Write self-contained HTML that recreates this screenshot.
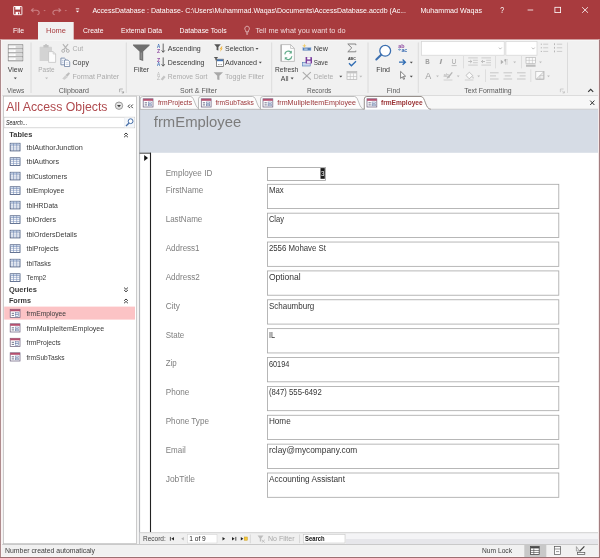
<!DOCTYPE html>
<html lang="en">
<head>
<meta charset="utf-8">
<title>AccessDatabase : Database - frmEmployee</title>
<style>
html,body{margin:0;padding:0;background:#fff;}
body{width:600px;height:558px;overflow:hidden;position:relative;}
#app{position:absolute;left:0;top:0;width:600px;height:558px;overflow:hidden;}
#ui{position:absolute;left:0;top:0;display:block;font-family:"Liberation Sans",sans-serif;}
#ui{will-change:transform;}
#ui text{white-space:pre;}
</style>
</head>
<body>
<div id="app">
<svg id="ui" width="600" height="558" viewBox="0 0 600 558">
<g id="base-surfaces">
<rect x="0.00" y="0.00" width="600.00" height="558.00" fill="#FFFFFF"/>
<rect x="0.00" y="0.00" width="600.00" height="39.80" fill="#A83B3E"/>
<rect x="0.00" y="39.80" width="600.00" height="55.70" fill="#F1F1F1"/>
<line x1="0.00" y1="40.20" x2="600.00" y2="40.20" stroke="#FAFAFA" stroke-width="0.8"/>
<line x1="0.00" y1="95.60" x2="600.00" y2="95.60" stroke="#D0D0D0" stroke-width="0.8"/>
<rect x="38.00" y="22.00" width="35.70" height="18.00" fill="#F1F1F1"/>
<rect x="139.70" y="96.00" width="458.60" height="13.20" fill="#F7F7F7"/>
<rect x="1.30" y="96.00" width="138.40" height="448.20" fill="#F3F3F3"/>
<rect x="3.50" y="96.20" width="132.90" height="447.50" fill="#FFFFFF" stroke="#B9B9B9" stroke-width="0.7"/>
<rect x="139.70" y="109.20" width="458.60" height="43.60" fill="#D6DCE5"/>
<line x1="139.60" y1="96.00" x2="139.60" y2="544.00" stroke="#9A9DA3" stroke-width="0.8"/>
<line x1="139.60" y1="153.20" x2="151.00" y2="153.20" stroke="#2E2E2E" stroke-width="0.9"/>
<line x1="150.50" y1="152.80" x2="150.50" y2="532.40" stroke="#222" stroke-width="1.1"/>
<path d="M144.2,155.1 L148,158.1 L144.2,161.1 Z" fill="#111"/>
<rect x="139.70" y="532.30" width="458.60" height="12.10" fill="#F0F0F0"/>
<rect x="346.00" y="533.20" width="252.00" height="5.80" fill="#F4F4F6"/>
<rect x="346.00" y="539.00" width="252.00" height="5.20" fill="#E6E6EA"/>
<line x1="139.70" y1="532.70" x2="598.30" y2="532.70" stroke="#D0D0D0" stroke-width="0.9"/>
<rect x="0.00" y="544.20" width="600.00" height="13.80" fill="#F1F1F1"/>
<line x1="0.00" y1="544.50" x2="600.00" y2="544.50" stroke="#C4C4C4" stroke-width="0.9"/>
<line x1="0.00" y1="556.60" x2="600.00" y2="556.60" stroke="#FBF4F4" stroke-width="0.8"/>
<rect x="524.30" y="544.60" width="22.00" height="12.40" fill="#C8C8C8"/>
</g>
<g id="title-bar">
<text x="92.40" y="12.60" font-size="7.4" fill="#FFFFFF" textLength="313.60" lengthAdjust="spacingAndGlyphs">AccessDatabase : Database- C:\Users\Muhammad.Waqas\Documents\AccessDatabase.accdb (Ac...</text>
<text x="420.40" y="12.60" font-size="7.4" fill="#FFFFFF" textLength="61.60" lengthAdjust="spacingAndGlyphs">Muhammad Waqas</text>
<text x="500.30" y="13.10" font-size="8.6" fill="#FFFFFF" textLength="3.80" lengthAdjust="spacingAndGlyphs">?</text>
<line x1="527.60" y1="10.00" x2="533.20" y2="10.00" stroke="#FFFFFF" stroke-width="0.8"/>
<rect x="554.90" y="7.30" width="5.70" height="5.30" fill="none" stroke="#FFFFFF" stroke-width="0.8"/>
<path d="M582.2,7.2 L588,12.8 M588,7.2 L582.2,12.8" fill="none" stroke="#FFFFFF" stroke-width="0.8"/>
<rect x="13.70" y="6.50" width="8.20" height="8.20" fill="none" stroke="#FFFFFF" stroke-width="0.9" rx="0.3"/>
<rect x="15.30" y="6.40" width="4.90" height="3.20" fill="#FFFFFF"/>
<rect x="15.60" y="11.80" width="4.30" height="3.00" fill="#FFFFFF"/>
<rect x="18.00" y="12.50" width="1.20" height="1.80" fill="#A83B3E"/>
<path d="M33.5,8.4 L31.4,10.3 L33.5,12.2 M31.6,10.3 L36.2,10.3 Q39.4,10.4 39.2,13.2 Q39,14.4 37.4,14.8" fill="none" stroke="#CB8184" stroke-width="1.1"/>
<path d="M43.40,9.90 L45.80,9.90 L44.60,11.30 Z" fill="#C87A7D"/>
<path d="M58.6,8.4 L60.7,10.3 L58.6,12.2 M60.5,10.3 L55.9,10.3 Q52.7,10.4 52.9,13.2 Q53.1,14.4 54.7,14.8" fill="none" stroke="#CB8184" stroke-width="1.1"/>
<path d="M64.60,9.90 L67.00,9.90 L65.80,11.30 Z" fill="#C87A7D"/>
<line x1="75.80" y1="8.80" x2="79.20" y2="8.80" stroke="#FFFFFF" stroke-width="0.8"/>
<path d="M75.90,10.70 L79.10,10.70 L77.50,12.50 Z" fill="#FFFFFF"/>
</g>
<g id="ribbon-tabs">
<text x="13.00" y="33.00" font-size="7.4" fill="#FFFFFF" textLength="11.20" lengthAdjust="spacingAndGlyphs">File</text>
<text x="46.00" y="33.00" font-size="7.4" fill="#A83B3E" textLength="20.00" lengthAdjust="spacingAndGlyphs">Home</text>
<text x="83.00" y="33.00" font-size="7.4" fill="#FFFFFF" textLength="20.60" lengthAdjust="spacingAndGlyphs">Create</text>
<text x="121.00" y="33.00" font-size="7.4" fill="#FFFFFF" textLength="41.00" lengthAdjust="spacingAndGlyphs">External Data</text>
<text x="179.60" y="33.00" font-size="7.4" fill="#FFFFFF" textLength="47.00" lengthAdjust="spacingAndGlyphs">Database Tools</text>
<text x="255.40" y="33.00" font-size="7.4" fill="#F0D9DA" textLength="90.20" lengthAdjust="spacingAndGlyphs">Tell me what you want to do</text>
<path d="M244.9,29.2 a2.3,2.3 0 1 1 4.4,0 q-0.9,1.2 -0.9,2.6 l-2.6,0 q0,-1.4 -0.9,-2.6 Z" fill="none" stroke="#F0D9DA" stroke-width="0.7"/>
<line x1="246.00" y1="33.00" x2="248.20" y2="33.00" stroke="#F0D9DA" stroke-width="0.7"/>
<line x1="246.30" y1="34.20" x2="247.90" y2="34.20" stroke="#F0D9DA" stroke-width="0.7"/>
</g>
<g id="ribbon-groups">
<line x1="31.00" y1="42.50" x2="31.00" y2="93.00" stroke="#D6D6D6" stroke-width="0.8"/>
<line x1="126.30" y1="42.50" x2="126.30" y2="93.00" stroke="#D6D6D6" stroke-width="0.8"/>
<line x1="271.70" y1="42.50" x2="271.70" y2="93.00" stroke="#D6D6D6" stroke-width="0.8"/>
<line x1="368.00" y1="42.50" x2="368.00" y2="93.00" stroke="#D6D6D6" stroke-width="0.8"/>
<line x1="418.30" y1="42.50" x2="418.30" y2="93.00" stroke="#D6D6D6" stroke-width="0.8"/>
<line x1="567.50" y1="42.50" x2="567.50" y2="93.00" stroke="#D6D6D6" stroke-width="0.8"/>
<text x="7.00" y="92.80" font-size="7.2" fill="#5A5A5A" textLength="17.20" lengthAdjust="spacingAndGlyphs">Views</text>
<text x="58.70" y="92.80" font-size="7.2" fill="#5A5A5A" textLength="30.30" lengthAdjust="spacingAndGlyphs">Clipboard</text>
<text x="180.00" y="92.80" font-size="7.2" fill="#5A5A5A" textLength="37.00" lengthAdjust="spacingAndGlyphs">Sort &amp; Filter</text>
<text x="307.00" y="92.80" font-size="7.2" fill="#5A5A5A" textLength="24.30" lengthAdjust="spacingAndGlyphs">Records</text>
<text x="386.70" y="92.80" font-size="7.2" fill="#5A5A5A" textLength="13.30" lengthAdjust="spacingAndGlyphs">Find</text>
<text x="464.20" y="92.80" font-size="7.2" fill="#5A5A5A" textLength="47.50" lengthAdjust="spacingAndGlyphs">Text Formatting</text>
<text x="7.80" y="71.80" font-size="7.2" fill="#3A3A3A" textLength="15.00" lengthAdjust="spacingAndGlyphs">View</text>
<path d="M13.80,77.50 L16.80,77.50 L15.30,79.30 Z" fill="#4A4A4A"/>
<text x="38.30" y="71.80" font-size="7.2" fill="#ABABAB" textLength="16.40" lengthAdjust="spacingAndGlyphs">Paste</text>
<path d="M45.10,77.50 L48.10,77.50 L46.60,79.30 Z" fill="#BDBDBD"/>
<text x="72.50" y="50.90" font-size="7.2" fill="#ABABAB" textLength="10.80" lengthAdjust="spacingAndGlyphs">Cut</text>
<text x="72.50" y="64.90" font-size="7.2" fill="#3A3A3A" textLength="16.50" lengthAdjust="spacingAndGlyphs">Copy</text>
<text x="72.50" y="78.80" font-size="7.2" fill="#ABABAB" textLength="46.70" lengthAdjust="spacingAndGlyphs">Format Painter</text>
<text x="133.70" y="71.80" font-size="7.2" fill="#3A3A3A" textLength="15.50" lengthAdjust="spacingAndGlyphs">Filter</text>
<text x="167.80" y="50.90" font-size="7.2" fill="#3A3A3A" textLength="33.00" lengthAdjust="spacingAndGlyphs">Ascending</text>
<text x="167.80" y="64.90" font-size="7.2" fill="#3A3A3A" textLength="36.70" lengthAdjust="spacingAndGlyphs">Descending</text>
<text x="167.80" y="78.80" font-size="7.2" fill="#ABABAB" textLength="39.70" lengthAdjust="spacingAndGlyphs">Remove Sort</text>
<text x="225.00" y="50.90" font-size="7.2" fill="#3A3A3A" textLength="28.80" lengthAdjust="spacingAndGlyphs">Selection</text>
<path d="M255.50,47.90 L258.50,47.90 L257.00,49.70 Z" fill="#4A4A4A"/>
<text x="225.00" y="64.90" font-size="7.2" fill="#3A3A3A" textLength="32.00" lengthAdjust="spacingAndGlyphs">Advanced</text>
<path d="M258.80,61.80 L261.80,61.80 L260.30,63.60 Z" fill="#4A4A4A"/>
<text x="225.00" y="78.80" font-size="7.2" fill="#ABABAB" textLength="39.20" lengthAdjust="spacingAndGlyphs">Toggle Filter</text>
<text x="275.00" y="71.80" font-size="7.2" fill="#3A3A3A" textLength="23.30" lengthAdjust="spacingAndGlyphs">Refresh</text>
<text x="280.80" y="80.80" font-size="7.2" fill="#3A3A3A" textLength="7.70" lengthAdjust="spacingAndGlyphs">All</text>
<path d="M290.60,77.60 L293.60,77.60 L292.10,79.40 Z" fill="#4A4A4A"/>
<text x="313.70" y="50.90" font-size="7.2" fill="#3A3A3A" textLength="14.30" lengthAdjust="spacingAndGlyphs">New</text>
<text x="313.70" y="64.90" font-size="7.2" fill="#3A3A3A" textLength="14.30" lengthAdjust="spacingAndGlyphs">Save</text>
<text x="313.70" y="78.80" font-size="7.2" fill="#ABABAB" textLength="19.60" lengthAdjust="spacingAndGlyphs">Delete</text>
<path d="M339.30,75.70 L342.30,75.70 L340.80,77.50 Z" fill="#4A4A4A"/>
<path d="M359.30,75.70 L362.30,75.70 L360.80,77.50 Z" fill="#BDBDBD"/>
<text x="376.30" y="71.80" font-size="7.2" fill="#3A3A3A" textLength="13.70" lengthAdjust="spacingAndGlyphs">Find</text>
<path d="M409.80,61.80 L412.80,61.80 L411.30,63.60 Z" fill="#4A4A4A"/>
<path d="M409.80,75.70 L412.80,75.70 L411.30,77.50 Z" fill="#4A4A4A"/>
<rect x="421.40" y="41.50" width="82.80" height="13.70" fill="#FFFFFF" stroke="#D4D4D4" stroke-width="0.7"/>
<rect x="505.90" y="41.50" width="31.10" height="13.70" fill="#FFFFFF" stroke="#D4D4D4" stroke-width="0.7"/>
<path d="M498.9,47.6 L500.3,49.1 L501.7,47.6" fill="none" stroke="#A0A0A0" stroke-width="0.7"/>
<path d="M531.9,47.6 L533.3,49.1 L534.7,47.6" fill="none" stroke="#A0A0A0" stroke-width="0.7"/>
</g>
<g id="ribbon-icons">
<rect x="8.20" y="44.80" width="14.60" height="4.00" fill="#FFFFFF"/>
<rect x="15.60" y="45.80" width="6.60" height="2.20" fill="#D8D8D8"/>
<rect x="9.20" y="46.10" width="5.00" height="1.40" fill="#F4F4F4"/>
<rect x="8.20" y="48.80" width="14.60" height="4.00" fill="#FFFFFF"/>
<rect x="15.60" y="49.80" width="6.60" height="2.20" fill="#D8D8D8"/>
<rect x="9.20" y="50.10" width="5.00" height="1.40" fill="#F4F4F4"/>
<rect x="8.20" y="52.80" width="14.60" height="4.00" fill="#FFFFFF"/>
<rect x="15.60" y="53.80" width="6.60" height="2.20" fill="#D8D8D8"/>
<rect x="9.20" y="54.10" width="5.00" height="1.40" fill="#F4F4F4"/>
<rect x="8.20" y="56.80" width="14.60" height="4.00" fill="#FFFFFF"/>
<rect x="15.60" y="57.80" width="6.60" height="2.20" fill="#D8D8D8"/>
<rect x="9.20" y="58.10" width="5.00" height="1.40" fill="#F4F4F4"/>
<line x1="8.00" y1="44.80" x2="23.00" y2="44.80" stroke="#777777" stroke-width="0.8"/>
<line x1="8.00" y1="48.80" x2="23.00" y2="48.80" stroke="#777777" stroke-width="0.8"/>
<line x1="8.00" y1="52.80" x2="23.00" y2="52.80" stroke="#777777" stroke-width="0.8"/>
<line x1="8.00" y1="56.80" x2="23.00" y2="56.80" stroke="#777777" stroke-width="0.8"/>
<line x1="8.00" y1="60.80" x2="23.00" y2="60.80" stroke="#777777" stroke-width="0.8"/>
<line x1="8.30" y1="44.50" x2="8.30" y2="61.00" stroke="#8A8A8A" stroke-width="0.7"/>
<line x1="22.80" y1="44.50" x2="22.80" y2="61.00" stroke="#8A8A8A" stroke-width="0.7"/>
<rect x="39.60" y="46.80" width="12.40" height="14.20" fill="#D3D3D3" rx="0.6"/>
<rect x="43.40" y="45.00" width="5.20" height="2.60" fill="#C2C2C2" rx="0.5"/>
<rect x="45.00" y="44.20" width="2.00" height="1.20" fill="#C2C2C2"/>
<path d="M48.6,51.6 L53.2,51.6 L55.6,54 L55.6,62.4 L48.6,62.4 Z" fill="#FCFCFC" stroke="#BEBEBE" stroke-width="0.7"/>
<path d="M53.2,51.6 L53.2,54 L55.6,54" fill="none" stroke="#BEBEBE" stroke-width="0.6"/>
<path d="M62.9,44.2 L67.5,49.8 M68.1,44.2 L63.5,49.8" fill="none" stroke="#B4B4B4" stroke-width="1.15"/>
<circle cx="63.2" cy="50.9" r="1.45" fill="none" stroke="#B4B4B4" stroke-width="1"/>
<circle cx="67.8" cy="50.9" r="1.45" fill="none" stroke="#B4B4B4" stroke-width="1"/>
<path d="M60.9,58.1 L64.4,58.1 L66,59.7 L66,64.8 L60.9,64.8 Z" fill="#F2F5FA" stroke="#64799C" stroke-width="0.75"/>
<path d="M64.5,60.1 L68,60.1 L69.7,61.8 L69.7,66.5 L64.5,66.5 Z" fill="#FFFFFF" stroke="#64799C" stroke-width="0.75"/>
<line x1="61.90" y1="60.50" x2="63.40" y2="60.50" stroke="#8A9CBC" stroke-width="0.5"/>
<line x1="61.90" y1="62.30" x2="63.40" y2="62.30" stroke="#8A9CBC" stroke-width="0.5"/>
<line x1="65.70" y1="62.80" x2="68.50" y2="62.80" stroke="#9FB0CC" stroke-width="0.5"/>
<line x1="65.70" y1="64.50" x2="68.50" y2="64.50" stroke="#9FB0CC" stroke-width="0.5"/>
<path d="M62.2,78.8 L65.4,75.2 L67.6,77.2 L64.6,79.8 Z" fill="#CFCFCF"/>
<path d="M65.6,75 L68.8,72.2 L70,73.4 L67.4,76.8 Z" fill="#BDBDBD"/>
<path d="M133,44.6 L149.6,44.6 L149.6,45.4 L143.2,51.6 L143.2,61 L139.5,59.8 L139.5,51.6 L133,45.4 Z" fill="#6F6F6F"/>
<path d="M140.6,52.4 L142.2,52.4 L142.2,59.6 L140.6,59.1 Z" fill="#8E8E8E"/>
<text x="157.00" y="48.00" font-size="5.2" fill="#3B6DB3" font-weight="700" textLength="3.20" lengthAdjust="spacingAndGlyphs">A</text>
<text x="157.00" y="52.60" font-size="5.2" fill="#8E4AA0" font-weight="700" textLength="3.20" lengthAdjust="spacingAndGlyphs">Z</text>
<path d="M163.2,43.6 L163.2,52 M161.6,50.4 L163.2,52.4 L164.8,50.4" fill="none" stroke="#444" stroke-width="0.8"/>
<text x="157.00" y="61.80" font-size="5.2" fill="#8E4AA0" font-weight="700" textLength="3.20" lengthAdjust="spacingAndGlyphs">Z</text>
<text x="157.00" y="66.40" font-size="5.2" fill="#3B6DB3" font-weight="700" textLength="3.20" lengthAdjust="spacingAndGlyphs">A</text>
<path d="M163.2,57.4 L163.2,65.8 M161.6,64.2 L163.2,66.2 L164.8,64.2" fill="none" stroke="#444" stroke-width="0.8"/>
<text x="157.00" y="75.60" font-size="5" fill="#B5B5B5" textLength="3.00" lengthAdjust="spacingAndGlyphs">A</text>
<text x="157.00" y="80.20" font-size="5" fill="#B5B5B5" textLength="3.00" lengthAdjust="spacingAndGlyphs">Z</text>
<path d="M160.6,79.2 L163.8,75.6 L165.6,77 L162.6,80.4 Z" fill="#C4C4C4"/>
<path d="M214.2,44.2 L220.8,44.2 L218.4,47 L218.4,50.6 L216.6,50 L216.6,47 Z" fill="#555"/>
<path d="M221.4,46.4 L219.6,49.2 L221,49.2 L219.8,52 L222.8,48.4 L221.4,48.4 L222.6,46.4 Z" fill="#F0B43C"/>
<path d="M213.8,57 L218.2,57 L216.6,58.8 L216.6,60.6 L215.4,60.2 L215.4,58.8 Z" fill="#555"/>
<rect x="216.60" y="59.20" width="6.80" height="7.20" fill="#FFFFFF" stroke="#5A5A5A" stroke-width="0.7"/>
<rect x="217.00" y="59.40" width="6.00" height="1.80" fill="#3F6FAE"/>
<line x1="218.00" y1="64.60" x2="222.00" y2="64.60" stroke="#555" stroke-width="0.7" stroke-dasharray="0.8 0.8"/>
<path d="M213.6,72.2 L223,72.2 L219.4,75.8 L219.4,80 L217.2,79.4 L217.2,75.8 Z" fill="#A9A9A9"/>
<path d="M281.2,44.6 L290.6,44.6 L294.4,48.4 L294.4,61.4 L281.2,61.4 Z" fill="#FDFDFD" stroke="#B4B4B4" stroke-width="0.8"/>
<line x1="281.20" y1="44.60" x2="281.20" y2="61.40" stroke="#B6B6B6" stroke-width="1.6"/>
<path d="M290.6,44.6 L290.6,48.4 L294.4,48.4" fill="none" stroke="#B4B4B4" stroke-width="0.7"/>
<path d="M284.8,54.4 A3.6,3.6 0 0 1 291,52.2" fill="none" stroke="#5FAA88" stroke-width="1.2"/>
<path d="M291.8,50.6 L291.8,53.4 L289,53.4 Z" fill="#5FAA88"/>
<path d="M291.8,56.2 A3.6,3.6 0 0 1 285.6,58.4" fill="none" stroke="#5FAA88" stroke-width="1.2"/>
<path d="M284.8,60 L284.8,57.2 L287.6,57.2 Z" fill="#5FAA88"/>
<rect x="302.80" y="47.60" width="8.20" height="3.00" fill="#527DB6" stroke="#A9BCD9" stroke-width="0.5"/>
<rect x="304.20" y="48.60" width="3.40" height="1.00" fill="#DCE6F4"/>
<path d="M304.4,43.6 L305,45.2 L306.6,45.8 L305,46.4 L304.4,48 L303.8,46.4 L302.2,45.8 L303.8,45.2 Z" fill="#F1CC6A"/>
<rect x="302.60" y="62.40" width="7.60" height="3.60" fill="#C9D8EE" stroke="#4E78B4" stroke-width="0.6"/>
<rect x="305.60" y="57.00" width="6.40" height="6.40" fill="#7A3E9D" rx="0.4"/>
<rect x="307.20" y="57.20" width="3.20" height="2.20" fill="#FFFFFF"/>
<rect x="307.00" y="60.80" width="3.60" height="2.60" fill="#E9DDF1"/>
<path d="M302.8,72.2 L310.8,79.6 M310.8,72.2 L302.8,79.6" fill="none" stroke="#ABABAB" stroke-width="1.15"/>
<path d="M355.8,45.2 L355.8,44 L347.8,44 L351.8,47.9 L347.8,51.8 L355.8,51.8 L355.8,50.6" fill="none" stroke="#7A7A7A" stroke-width="0.9"/>
<text x="348.00" y="59.90" font-size="3.8" fill="#333" font-weight="700" textLength="7.80" lengthAdjust="spacingAndGlyphs">ABC</text>
<path d="M349,63.2 L351.4,65.8 L356,61.2" fill="none" stroke="#2F6CB3" stroke-width="1.3"/>
<rect x="347.00" y="71.40" width="9.80" height="8.20" fill="#F8F8F8" stroke="#B5B5B5" stroke-width="0.7"/>
<rect x="347.00" y="71.40" width="9.80" height="2.00" fill="#C3C3C3"/>
<line x1="350.30" y1="73.40" x2="350.30" y2="79.60" stroke="#BDBDBD" stroke-width="0.6"/>
<line x1="353.50" y1="73.40" x2="353.50" y2="79.60" stroke="#BDBDBD" stroke-width="0.6"/>
<line x1="347.00" y1="76.50" x2="356.80" y2="76.50" stroke="#BDBDBD" stroke-width="0.6"/>
<circle cx="385.2" cy="50.8" r="5.4" fill="#FFFFFF" stroke="#3B6FB0" stroke-width="1.3"/>
<line x1="381.20" y1="54.80" x2="376.30" y2="59.50" stroke="#3B6FB0" stroke-width="2.0" stroke-linecap="round"/>
<text x="398.20" y="47.60" font-size="5.4" fill="#8E4AA0" font-weight="700" textLength="6.20" lengthAdjust="spacingAndGlyphs">ab</text>
<text x="401.40" y="52.40" font-size="5.4" fill="#3B6DB3" font-weight="700" textLength="5.80" lengthAdjust="spacingAndGlyphs">ac</text>
<path d="M398,49.6 L400.4,49.6 M399.4,48.6 L400.6,49.6 L399.4,50.6" fill="none" stroke="#3B6DB3" stroke-width="0.6"/>
<path d="M399,62.2 L405,62.2 M402.6,59.6 L405.4,62.2 L402.6,64.8" fill="none" stroke="#2F6CB3" stroke-width="1.3"/>
<path d="M400.6,71.4 L400.6,78.4 L402.4,76.8 L403.6,79.4 L404.6,79 L403.4,76.4 L405.6,76.2 Z" fill="#FFFFFF" stroke="#555" stroke-width="0.7"/>
<text x="425.20" y="64.40" font-size="7.4" fill="#9E9E9E" font-weight="700" textLength="4.50" lengthAdjust="spacingAndGlyphs">B</text>
<text x="439.40" y="64.40" font-size="7.4" fill="#9E9E9E" font-weight="700" font-style="italic" textLength="2.60" lengthAdjust="spacingAndGlyphs">I</text>
<text x="451.80" y="64.20" font-size="7.2" fill="#9E9E9E" textLength="4.50" lengthAdjust="spacingAndGlyphs">U</text>
<line x1="451.60" y1="65.60" x2="456.60" y2="65.60" stroke="#9E9E9E" stroke-width="0.6"/>
<line x1="463.50" y1="56.00" x2="463.50" y2="68.40" stroke="#D6D6D6" stroke-width="0.7"/>
<line x1="495.50" y1="56.00" x2="495.50" y2="68.40" stroke="#D6D6D6" stroke-width="0.7"/>
<line x1="521.50" y1="56.00" x2="521.50" y2="68.40" stroke="#D6D6D6" stroke-width="0.7"/>
<line x1="485.50" y1="69.40" x2="485.50" y2="82.00" stroke="#D6D6D6" stroke-width="0.7"/>
<line x1="530.80" y1="69.40" x2="530.80" y2="82.00" stroke="#D6D6D6" stroke-width="0.7"/>
<line x1="468.20" y1="57.90" x2="477.80" y2="57.90" stroke="#B5B5B5" stroke-width="0.6"/>
<line x1="468.20" y1="65.10" x2="477.80" y2="65.10" stroke="#B5B5B5" stroke-width="0.6"/>
<line x1="473.00" y1="60.30" x2="477.80" y2="60.30" stroke="#B5B5B5" stroke-width="0.6"/>
<line x1="473.00" y1="62.70" x2="477.80" y2="62.70" stroke="#B5B5B5" stroke-width="0.6"/>
<path d="M468.2,61.5 L471.59999999999997,61.5 M470.2,60 L471.8,61.5 L470.2,63" fill="none" stroke="#A9A9A9" stroke-width="0.7"/>
<line x1="481.40" y1="57.90" x2="491.00" y2="57.90" stroke="#B5B5B5" stroke-width="0.6"/>
<line x1="481.40" y1="65.10" x2="491.00" y2="65.10" stroke="#B5B5B5" stroke-width="0.6"/>
<line x1="486.20" y1="60.30" x2="491.00" y2="60.30" stroke="#B5B5B5" stroke-width="0.6"/>
<line x1="486.20" y1="62.70" x2="491.00" y2="62.70" stroke="#B5B5B5" stroke-width="0.6"/>
<path d="M481.59999999999997,61.5 L485.0,61.5 M483.0,60 L481.4,61.5 L483.0,63" fill="none" stroke="#A9A9A9" stroke-width="0.7"/>
<path d="M500.8,59.8 L503.6,62 L500.8,64.2 Z" fill="#B0B0B0"/>
<text x="504.00" y="64.40" font-size="6.6" fill="#B0B0B0" textLength="4.00" lengthAdjust="spacingAndGlyphs">¶</text>
<path d="M513.30,61.60 L516.10,61.60 L514.70,63.20 Z" fill="#BDBDBD"/>
<rect x="526.00" y="57.30" width="9.60" height="6.30" fill="#FAFAFA" stroke="#B0B0B0" stroke-width="0.6"/>
<line x1="529.20" y1="57.30" x2="529.20" y2="63.60" stroke="#B8B8B8" stroke-width="0.5"/>
<line x1="532.40" y1="57.30" x2="532.40" y2="63.60" stroke="#B8B8B8" stroke-width="0.5"/>
<line x1="526.00" y1="60.40" x2="535.60" y2="60.40" stroke="#B8B8B8" stroke-width="0.5"/>
<rect x="526.00" y="64.60" width="9.60" height="2.20" fill="#BDBDBD"/>
<path d="M539.10,61.60 L541.90,61.60 L540.50,63.20 Z" fill="#BDBDBD"/>
<rect x="540.80" y="43.70" width="1.00" height="1.00" fill="#A8A8A8"/>
<line x1="543.20" y1="44.20" x2="548.20" y2="44.20" stroke="#BBBBBB" stroke-width="0.7"/>
<rect x="554.00" y="43.30" width="0.80" height="1.80" fill="#A8A8A8"/>
<line x1="556.80" y1="44.20" x2="562.20" y2="44.20" stroke="#BBBBBB" stroke-width="0.7"/>
<rect x="540.80" y="47.30" width="1.00" height="1.00" fill="#A8A8A8"/>
<line x1="543.20" y1="47.80" x2="548.20" y2="47.80" stroke="#BBBBBB" stroke-width="0.7"/>
<rect x="554.00" y="46.90" width="0.80" height="1.80" fill="#A8A8A8"/>
<line x1="556.80" y1="47.80" x2="562.20" y2="47.80" stroke="#BBBBBB" stroke-width="0.7"/>
<rect x="540.80" y="50.90" width="1.00" height="1.00" fill="#A8A8A8"/>
<line x1="543.20" y1="51.40" x2="548.20" y2="51.40" stroke="#BBBBBB" stroke-width="0.7"/>
<rect x="554.00" y="50.50" width="0.80" height="1.80" fill="#A8A8A8"/>
<line x1="556.80" y1="51.40" x2="562.20" y2="51.40" stroke="#BBBBBB" stroke-width="0.7"/>
<text x="425.20" y="78.80" font-size="9.6" fill="#9E9E9E" textLength="6.00" lengthAdjust="spacingAndGlyphs">A</text>
<path d="M436.10,75.60 L438.90,75.60 L437.50,77.20 Z" fill="#BDBDBD"/>
<text x="443.60" y="76.60" font-size="5" fill="#ADADAD" textLength="7.00" lengthAdjust="spacingAndGlyphs">aby</text>
<path d="M446.4,78.2 L451.8,72 L452.8,72.8 L448,78.6 Z" fill="#B5B5B5"/>
<line x1="443.60" y1="80.00" x2="452.40" y2="80.00" stroke="#D0D0D0" stroke-width="1"/>
<path d="M456.80,75.60 L459.60,75.60 L458.20,77.20 Z" fill="#BDBDBD"/>
<path d="M466,75.4 L469.4,72.2 L472.8,75.6 L469.2,78.8 Z" fill="#FAFAFA" stroke="#ADADAD" stroke-width="0.7"/>
<path d="M472.8,76 Q474.2,78 473.2,78.8 Q472,78.4 472.8,76 Z" fill="#B5B5B5"/>
<line x1="464.80" y1="80.00" x2="473.40" y2="80.00" stroke="#D0D0D0" stroke-width="1"/>
<path d="M477.30,75.60 L480.10,75.60 L478.70,77.20 Z" fill="#BDBDBD"/>
<line x1="490.00" y1="72.80" x2="498.60" y2="72.80" stroke="#B4B4B4" stroke-width="0.7"/>
<line x1="490.00" y1="75.90" x2="496.00" y2="75.90" stroke="#B4B4B4" stroke-width="0.7"/>
<line x1="490.00" y1="79.00" x2="498.60" y2="79.00" stroke="#B4B4B4" stroke-width="0.7"/>
<line x1="503.50" y1="72.80" x2="512.10" y2="72.80" stroke="#B4B4B4" stroke-width="0.7"/>
<line x1="504.80" y1="75.90" x2="510.80" y2="75.90" stroke="#B4B4B4" stroke-width="0.7"/>
<line x1="503.50" y1="79.00" x2="512.10" y2="79.00" stroke="#B4B4B4" stroke-width="0.7"/>
<line x1="517.00" y1="72.80" x2="525.60" y2="72.80" stroke="#B4B4B4" stroke-width="0.7"/>
<line x1="519.60" y1="75.90" x2="525.60" y2="75.90" stroke="#B4B4B4" stroke-width="0.7"/>
<line x1="517.00" y1="79.00" x2="525.60" y2="79.00" stroke="#B4B4B4" stroke-width="0.7"/>
<rect x="535.80" y="71.40" width="8.20" height="8.20" fill="#FAFAFA" stroke="#B0B0B0" stroke-width="0.6"/>
<path d="M536.4,79 L543.6,71.8 L543.6,79 Z" fill="#EDEDED" stroke="#ADADAD" stroke-width="0.6"/>
<line x1="539.90" y1="75.40" x2="539.90" y2="79.60" stroke="#B8B8B8" stroke-width="0.5"/>
<line x1="539.90" y1="75.50" x2="544.00" y2="75.50" stroke="#B8B8B8" stroke-width="0.5"/>
<path d="M547.10,75.60 L549.90,75.60 L548.50,77.20 Z" fill="#BDBDBD"/>
<path d="M119.6,92.2 L119.6,89 L122.8,89" fill="none" stroke="#8A8A8A" stroke-width="0.6"/>
<path d="M121.19999999999999,90.6 L123.6,93 M123.6,91.2 L123.6,93 L121.8,93" fill="none" stroke="#8A8A8A" stroke-width="0.6"/>
<path d="M560.4,92.2 L560.4,89 L563.6,89" fill="none" stroke="#B5B5B5" stroke-width="0.6"/>
<path d="M562.0,90.6 L564.4,93 M564.4,91.2 L564.4,93 L562.6,93" fill="none" stroke="#B5B5B5" stroke-width="0.6"/>
</g>
<g id="nav-pane">
<text x="6.30" y="111.00" font-size="12.5" fill="#B04A4E" textLength="101.20" lengthAdjust="spacingAndGlyphs">All Access Objects</text>
<circle cx="119" cy="105.7" r="3.7" fill="#E3E3E3" stroke="#858585" stroke-width="0.8"/>
<path d="M117.00,104.95 L121.00,104.95 L119.00,107.25 Z" fill="#3F3F3F"/>
<path d="M129.9,104.5 L128.1,106.3 L129.9,108.1 M132.8,104.5 L131,106.3 L132.8,108.1" fill="none" stroke="#3A3A3A" stroke-width="1.0"/>
<rect x="3.90" y="117.20" width="130.80" height="10.60" fill="#FFFFFF" stroke="#C6C6C6" stroke-width="0.7"/>
<rect x="124.40" y="117.60" width="9.90" height="9.80" fill="#F4F7FB"/>
<line x1="124.40" y1="117.60" x2="124.40" y2="127.40" stroke="#E2E6EC" stroke-width="0.5"/>
<text x="6.00" y="125.00" font-size="7.2" fill="#161616" font-style="italic" textLength="21.20" lengthAdjust="spacingAndGlyphs">Search...</text>
<circle cx="130.6" cy="121.2" r="2.4" fill="#FFFFFF" stroke="#456DA6" stroke-width="1.0"/>
<line x1="128.80" y1="123.20" x2="126.00" y2="126.00" stroke="#456DA6" stroke-width="1.3"/>
<text x="9.30" y="137.30" font-size="7.4" fill="#3B3B3B" font-weight="700" textLength="23.00" lengthAdjust="spacingAndGlyphs">Tables</text>
<path d="M124.1,134.8 L126,133.0 L127.9,134.8 M124.1,137.2 L126,135.39999999999998 L127.9,137.2" fill="none" stroke="#3A3A3A" stroke-width="1.0"/>
<rect x="10.20" y="143.30" width="9.80" height="7.60" fill="#FFFFFF" stroke="#46577C" stroke-width="0.85"/>
<rect x="10.50" y="143.60" width="9.20" height="1.60" fill="#C9D6EC"/>
<line x1="10.20" y1="145.20" x2="20.00" y2="145.20" stroke="#5F76A3" stroke-width="0.55"/>
<line x1="13.50" y1="143.30" x2="13.50" y2="150.90" stroke="#6B82AE" stroke-width="0.55"/>
<line x1="16.70" y1="143.30" x2="16.70" y2="150.90" stroke="#6B82AE" stroke-width="0.55"/>
<line x1="10.20" y1="147.10" x2="20.00" y2="147.10" stroke="#7F95BD" stroke-width="0.55"/>
<line x1="10.20" y1="149.00" x2="20.00" y2="149.00" stroke="#7F95BD" stroke-width="0.55"/>
<text x="26.50" y="149.90" font-size="7.2" fill="#3A3A3A" textLength="56.30" lengthAdjust="spacingAndGlyphs">tblAuthorJunction</text>
<rect x="10.20" y="157.80" width="9.80" height="7.60" fill="#FFFFFF" stroke="#46577C" stroke-width="0.85"/>
<rect x="10.50" y="158.10" width="9.20" height="1.60" fill="#C9D6EC"/>
<line x1="10.20" y1="159.70" x2="20.00" y2="159.70" stroke="#5F76A3" stroke-width="0.55"/>
<line x1="13.50" y1="157.80" x2="13.50" y2="165.40" stroke="#6B82AE" stroke-width="0.55"/>
<line x1="16.70" y1="157.80" x2="16.70" y2="165.40" stroke="#6B82AE" stroke-width="0.55"/>
<line x1="10.20" y1="161.60" x2="20.00" y2="161.60" stroke="#7F95BD" stroke-width="0.55"/>
<line x1="10.20" y1="163.50" x2="20.00" y2="163.50" stroke="#7F95BD" stroke-width="0.55"/>
<text x="26.50" y="164.40" font-size="7.2" fill="#3A3A3A" textLength="32.50" lengthAdjust="spacingAndGlyphs">tblAuthors</text>
<rect x="10.20" y="172.30" width="9.80" height="7.60" fill="#FFFFFF" stroke="#46577C" stroke-width="0.85"/>
<rect x="10.50" y="172.60" width="9.20" height="1.60" fill="#C9D6EC"/>
<line x1="10.20" y1="174.20" x2="20.00" y2="174.20" stroke="#5F76A3" stroke-width="0.55"/>
<line x1="13.50" y1="172.30" x2="13.50" y2="179.90" stroke="#6B82AE" stroke-width="0.55"/>
<line x1="16.70" y1="172.30" x2="16.70" y2="179.90" stroke="#6B82AE" stroke-width="0.55"/>
<line x1="10.20" y1="176.10" x2="20.00" y2="176.10" stroke="#7F95BD" stroke-width="0.55"/>
<line x1="10.20" y1="178.00" x2="20.00" y2="178.00" stroke="#7F95BD" stroke-width="0.55"/>
<text x="26.50" y="178.90" font-size="7.2" fill="#3A3A3A" textLength="40.70" lengthAdjust="spacingAndGlyphs">tblCustomers</text>
<rect x="10.20" y="186.80" width="9.80" height="7.60" fill="#FFFFFF" stroke="#46577C" stroke-width="0.85"/>
<rect x="10.50" y="187.10" width="9.20" height="1.60" fill="#C9D6EC"/>
<line x1="10.20" y1="188.70" x2="20.00" y2="188.70" stroke="#5F76A3" stroke-width="0.55"/>
<line x1="13.50" y1="186.80" x2="13.50" y2="194.40" stroke="#6B82AE" stroke-width="0.55"/>
<line x1="16.70" y1="186.80" x2="16.70" y2="194.40" stroke="#6B82AE" stroke-width="0.55"/>
<line x1="10.20" y1="190.60" x2="20.00" y2="190.60" stroke="#7F95BD" stroke-width="0.55"/>
<line x1="10.20" y1="192.50" x2="20.00" y2="192.50" stroke="#7F95BD" stroke-width="0.55"/>
<text x="26.50" y="193.40" font-size="7.2" fill="#3A3A3A" textLength="37.70" lengthAdjust="spacingAndGlyphs">tblEmployee</text>
<rect x="10.20" y="201.30" width="9.80" height="7.60" fill="#FFFFFF" stroke="#46577C" stroke-width="0.85"/>
<rect x="10.50" y="201.60" width="9.20" height="1.60" fill="#C9D6EC"/>
<line x1="10.20" y1="203.20" x2="20.00" y2="203.20" stroke="#5F76A3" stroke-width="0.55"/>
<line x1="13.50" y1="201.30" x2="13.50" y2="208.90" stroke="#6B82AE" stroke-width="0.55"/>
<line x1="16.70" y1="201.30" x2="16.70" y2="208.90" stroke="#6B82AE" stroke-width="0.55"/>
<line x1="10.20" y1="205.10" x2="20.00" y2="205.10" stroke="#7F95BD" stroke-width="0.55"/>
<line x1="10.20" y1="207.00" x2="20.00" y2="207.00" stroke="#7F95BD" stroke-width="0.55"/>
<text x="26.50" y="207.90" font-size="7.2" fill="#3A3A3A" textLength="31.40" lengthAdjust="spacingAndGlyphs">tblHRData</text>
<rect x="10.20" y="215.80" width="9.80" height="7.60" fill="#FFFFFF" stroke="#46577C" stroke-width="0.85"/>
<rect x="10.50" y="216.10" width="9.20" height="1.60" fill="#C9D6EC"/>
<line x1="10.20" y1="217.70" x2="20.00" y2="217.70" stroke="#5F76A3" stroke-width="0.55"/>
<line x1="13.50" y1="215.80" x2="13.50" y2="223.40" stroke="#6B82AE" stroke-width="0.55"/>
<line x1="16.70" y1="215.80" x2="16.70" y2="223.40" stroke="#6B82AE" stroke-width="0.55"/>
<line x1="10.20" y1="219.60" x2="20.00" y2="219.60" stroke="#7F95BD" stroke-width="0.55"/>
<line x1="10.20" y1="221.50" x2="20.00" y2="221.50" stroke="#7F95BD" stroke-width="0.55"/>
<text x="26.50" y="222.40" font-size="7.2" fill="#3A3A3A" textLength="29.50" lengthAdjust="spacingAndGlyphs">tblOrders</text>
<rect x="10.20" y="230.30" width="9.80" height="7.60" fill="#FFFFFF" stroke="#46577C" stroke-width="0.85"/>
<rect x="10.50" y="230.60" width="9.20" height="1.60" fill="#C9D6EC"/>
<line x1="10.20" y1="232.20" x2="20.00" y2="232.20" stroke="#5F76A3" stroke-width="0.55"/>
<line x1="13.50" y1="230.30" x2="13.50" y2="237.90" stroke="#6B82AE" stroke-width="0.55"/>
<line x1="16.70" y1="230.30" x2="16.70" y2="237.90" stroke="#6B82AE" stroke-width="0.55"/>
<line x1="10.20" y1="234.10" x2="20.00" y2="234.10" stroke="#7F95BD" stroke-width="0.55"/>
<line x1="10.20" y1="236.00" x2="20.00" y2="236.00" stroke="#7F95BD" stroke-width="0.55"/>
<text x="26.50" y="236.90" font-size="7.2" fill="#3A3A3A" textLength="50.50" lengthAdjust="spacingAndGlyphs">tblOrdersDetails</text>
<rect x="10.20" y="244.80" width="9.80" height="7.60" fill="#FFFFFF" stroke="#46577C" stroke-width="0.85"/>
<rect x="10.50" y="245.10" width="9.20" height="1.60" fill="#C9D6EC"/>
<line x1="10.20" y1="246.70" x2="20.00" y2="246.70" stroke="#5F76A3" stroke-width="0.55"/>
<line x1="13.50" y1="244.80" x2="13.50" y2="252.40" stroke="#6B82AE" stroke-width="0.55"/>
<line x1="16.70" y1="244.80" x2="16.70" y2="252.40" stroke="#6B82AE" stroke-width="0.55"/>
<line x1="10.20" y1="248.60" x2="20.00" y2="248.60" stroke="#7F95BD" stroke-width="0.55"/>
<line x1="10.20" y1="250.50" x2="20.00" y2="250.50" stroke="#7F95BD" stroke-width="0.55"/>
<text x="26.50" y="251.40" font-size="7.2" fill="#3A3A3A" textLength="32.30" lengthAdjust="spacingAndGlyphs">tblProjects</text>
<rect x="10.20" y="259.30" width="9.80" height="7.60" fill="#FFFFFF" stroke="#46577C" stroke-width="0.85"/>
<rect x="10.50" y="259.60" width="9.20" height="1.60" fill="#C9D6EC"/>
<line x1="10.20" y1="261.20" x2="20.00" y2="261.20" stroke="#5F76A3" stroke-width="0.55"/>
<line x1="13.50" y1="259.30" x2="13.50" y2="266.90" stroke="#6B82AE" stroke-width="0.55"/>
<line x1="16.70" y1="259.30" x2="16.70" y2="266.90" stroke="#6B82AE" stroke-width="0.55"/>
<line x1="10.20" y1="263.10" x2="20.00" y2="263.10" stroke="#7F95BD" stroke-width="0.55"/>
<line x1="10.20" y1="265.00" x2="20.00" y2="265.00" stroke="#7F95BD" stroke-width="0.55"/>
<text x="26.50" y="265.90" font-size="7.2" fill="#3A3A3A" textLength="24.40" lengthAdjust="spacingAndGlyphs">tblTasks</text>
<rect x="10.20" y="273.80" width="9.80" height="7.60" fill="#FFFFFF" stroke="#46577C" stroke-width="0.85"/>
<rect x="10.50" y="274.10" width="9.20" height="1.60" fill="#C9D6EC"/>
<line x1="10.20" y1="275.70" x2="20.00" y2="275.70" stroke="#5F76A3" stroke-width="0.55"/>
<line x1="13.50" y1="273.80" x2="13.50" y2="281.40" stroke="#6B82AE" stroke-width="0.55"/>
<line x1="16.70" y1="273.80" x2="16.70" y2="281.40" stroke="#6B82AE" stroke-width="0.55"/>
<line x1="10.20" y1="277.60" x2="20.00" y2="277.60" stroke="#7F95BD" stroke-width="0.55"/>
<line x1="10.20" y1="279.50" x2="20.00" y2="279.50" stroke="#7F95BD" stroke-width="0.55"/>
<text x="26.50" y="280.40" font-size="7.2" fill="#3A3A3A" textLength="19.70" lengthAdjust="spacingAndGlyphs">Temp2</text>
<text x="8.90" y="292.10" font-size="7.4" fill="#3B3B3B" font-weight="700" textLength="28.00" lengthAdjust="spacingAndGlyphs">Queries</text>
<path d="M124.1,290.0 L126,291.8 L127.9,290.0 M124.1,287.6 L126,289.40000000000003 L127.9,287.6" fill="none" stroke="#3A3A3A" stroke-width="1.0"/>
<text x="8.90" y="303.40" font-size="7.4" fill="#3B3B3B" font-weight="700" textLength="22.10" lengthAdjust="spacingAndGlyphs">Forms</text>
<path d="M124.1,300.8 L126,299.0 L127.9,300.8 M124.1,303.2 L126,301.4 L127.9,303.2" fill="none" stroke="#3A3A3A" stroke-width="1.0"/>
<rect x="4.20" y="306.60" width="130.80" height="13.00" fill="#FCC3C5"/>
<rect x="10.20" y="309.30" width="9.80" height="8.20" fill="#FFFFFF" stroke="#6E6480" stroke-width="0.75"/>
<rect x="10.20" y="309.30" width="9.80" height="2.00" fill="#B5506F"/>
<line x1="11.70" y1="313.30" x2="14.00" y2="313.30" stroke="#4D4D6A" stroke-width="0.8"/>
<line x1="11.70" y1="315.40" x2="14.00" y2="315.40" stroke="#4D4D6A" stroke-width="0.8"/>
<rect x="15.20" y="312.50" width="3.50" height="1.60" fill="#F1F5FB" stroke="#5C6F9E" stroke-width="0.5"/>
<rect x="15.20" y="314.70" width="3.50" height="1.60" fill="#F1F5FB" stroke="#5C6F9E" stroke-width="0.5"/>
<text x="26.50" y="316.00" font-size="7.2" fill="#3A3A3A" textLength="39.50" lengthAdjust="spacingAndGlyphs">frmEmployee</text>
<rect x="10.20" y="323.80" width="9.80" height="8.20" fill="#FFFFFF" stroke="#6E6480" stroke-width="0.75"/>
<rect x="10.20" y="323.80" width="9.80" height="2.00" fill="#B5506F"/>
<line x1="11.70" y1="327.80" x2="14.00" y2="327.80" stroke="#4D4D6A" stroke-width="0.8"/>
<line x1="11.70" y1="329.90" x2="14.00" y2="329.90" stroke="#4D4D6A" stroke-width="0.8"/>
<rect x="15.20" y="327.00" width="3.50" height="1.60" fill="#F1F5FB" stroke="#5C6F9E" stroke-width="0.5"/>
<rect x="15.20" y="329.20" width="3.50" height="1.60" fill="#F1F5FB" stroke="#5C6F9E" stroke-width="0.5"/>
<text x="26.50" y="330.50" font-size="7.2" fill="#3A3A3A" textLength="77.70" lengthAdjust="spacingAndGlyphs">frmMulipleItemEmployee</text>
<rect x="10.20" y="338.30" width="9.80" height="8.20" fill="#FFFFFF" stroke="#6E6480" stroke-width="0.75"/>
<rect x="10.20" y="338.30" width="9.80" height="2.00" fill="#B5506F"/>
<line x1="11.70" y1="342.30" x2="14.00" y2="342.30" stroke="#4D4D6A" stroke-width="0.8"/>
<line x1="11.70" y1="344.40" x2="14.00" y2="344.40" stroke="#4D4D6A" stroke-width="0.8"/>
<rect x="15.20" y="341.50" width="3.50" height="1.60" fill="#F1F5FB" stroke="#5C6F9E" stroke-width="0.5"/>
<rect x="15.20" y="343.70" width="3.50" height="1.60" fill="#F1F5FB" stroke="#5C6F9E" stroke-width="0.5"/>
<text x="26.50" y="345.00" font-size="7.2" fill="#3A3A3A" textLength="34.20" lengthAdjust="spacingAndGlyphs">frmProjects</text>
<rect x="10.20" y="352.80" width="9.80" height="8.20" fill="#FFFFFF" stroke="#6E6480" stroke-width="0.75"/>
<rect x="10.20" y="352.80" width="9.80" height="2.00" fill="#B5506F"/>
<line x1="11.70" y1="356.80" x2="14.00" y2="356.80" stroke="#4D4D6A" stroke-width="0.8"/>
<line x1="11.70" y1="358.90" x2="14.00" y2="358.90" stroke="#4D4D6A" stroke-width="0.8"/>
<rect x="15.20" y="356.00" width="3.50" height="1.60" fill="#F1F5FB" stroke="#5C6F9E" stroke-width="0.5"/>
<rect x="15.20" y="358.20" width="3.50" height="1.60" fill="#F1F5FB" stroke="#5C6F9E" stroke-width="0.5"/>
<text x="26.50" y="359.50" font-size="7.2" fill="#3A3A3A" textLength="38.10" lengthAdjust="spacingAndGlyphs">frmSubTasks</text>
</g>
<g id="document-tabs">
<path d="M140.2,109.4 L140.2,99.1 Q140.2,96.5 142.79999999999998,96.5 L190.5,96.5 C195.0,96.5 194.5,109.3 200.5,109.3 Z" fill="#FCFCFC" stroke="#A3A3A3" stroke-width="0.7"/>
<rect x="143.20" y="98.80" width="9.80" height="8.20" fill="#FFFFFF" stroke="#6E6480" stroke-width="0.75"/>
<rect x="143.20" y="98.80" width="9.80" height="2.00" fill="#B5506F"/>
<line x1="144.70" y1="102.80" x2="147.00" y2="102.80" stroke="#4D4D6A" stroke-width="0.8"/>
<line x1="144.70" y1="104.90" x2="147.00" y2="104.90" stroke="#4D4D6A" stroke-width="0.8"/>
<rect x="148.20" y="102.00" width="3.50" height="1.60" fill="#F1F5FB" stroke="#5C6F9E" stroke-width="0.5"/>
<rect x="148.20" y="104.20" width="3.50" height="1.60" fill="#F1F5FB" stroke="#5C6F9E" stroke-width="0.5"/>
<text x="158.00" y="105.30" font-size="7.0" fill="#9A3336" textLength="34.00" lengthAdjust="spacingAndGlyphs">frmProjects</text>
<path d="M198.5,109.4 L198.5,99.1 Q198.5,96.5 201.1,96.5 L252.5,96.5 C257.0,96.5 256.5,109.3 262.5,109.3 Z" fill="#FCFCFC" stroke="#A3A3A3" stroke-width="0.7"/>
<rect x="201.30" y="98.80" width="9.80" height="8.20" fill="#FFFFFF" stroke="#6E6480" stroke-width="0.75"/>
<rect x="201.30" y="98.80" width="9.80" height="2.00" fill="#B5506F"/>
<line x1="202.80" y1="102.80" x2="205.10" y2="102.80" stroke="#4D4D6A" stroke-width="0.8"/>
<line x1="202.80" y1="104.90" x2="205.10" y2="104.90" stroke="#4D4D6A" stroke-width="0.8"/>
<rect x="206.30" y="102.00" width="3.50" height="1.60" fill="#F1F5FB" stroke="#5C6F9E" stroke-width="0.5"/>
<rect x="206.30" y="104.20" width="3.50" height="1.60" fill="#F1F5FB" stroke="#5C6F9E" stroke-width="0.5"/>
<text x="215.50" y="105.30" font-size="7.0" fill="#9A3336" textLength="38.30" lengthAdjust="spacingAndGlyphs">frmSubTasks</text>
<path d="M260.5,109.4 L260.5,99.1 Q260.5,96.5 263.1,96.5 L354.5,96.5 C359.0,96.5 358.5,109.3 364.5,109.3 Z" fill="#FCFCFC" stroke="#A3A3A3" stroke-width="0.7"/>
<rect x="263.00" y="98.80" width="9.80" height="8.20" fill="#FFFFFF" stroke="#6E6480" stroke-width="0.75"/>
<rect x="263.00" y="98.80" width="9.80" height="2.00" fill="#B5506F"/>
<line x1="264.50" y1="102.80" x2="266.80" y2="102.80" stroke="#4D4D6A" stroke-width="0.8"/>
<line x1="264.50" y1="104.90" x2="266.80" y2="104.90" stroke="#4D4D6A" stroke-width="0.8"/>
<rect x="268.00" y="102.00" width="3.50" height="1.60" fill="#F1F5FB" stroke="#5C6F9E" stroke-width="0.5"/>
<rect x="268.00" y="104.20" width="3.50" height="1.60" fill="#F1F5FB" stroke="#5C6F9E" stroke-width="0.5"/>
<text x="277.30" y="105.30" font-size="7.0" fill="#9A3336" textLength="78.70" lengthAdjust="spacingAndGlyphs">frmMulipleItemEmployee</text>
<path d="M364.3,109.4 L364.3,99.1 Q364.3,96.5 366.90000000000003,96.5 L421,96.5 C425.5,96.5 425,109.3 431,109.3 Z" fill="#FFFFFF"/>
<path d="M364.3,109.4 L364.3,99.1 Q364.3,96.5 366.90000000000003,96.5 L421,96.5 C425.5,96.5 425,109.3 431,109.3" fill="none" stroke="#8C8580" stroke-width="0.9"/>
<line x1="430.50" y1="109.20" x2="598.00" y2="109.20" stroke="#C6C6C6" stroke-width="0.8"/>
<rect x="367.00" y="98.80" width="9.80" height="8.20" fill="#FFFFFF" stroke="#6E6480" stroke-width="0.75"/>
<rect x="367.00" y="98.80" width="9.80" height="2.00" fill="#B5506F"/>
<line x1="368.50" y1="102.80" x2="370.80" y2="102.80" stroke="#4D4D6A" stroke-width="0.8"/>
<line x1="368.50" y1="104.90" x2="370.80" y2="104.90" stroke="#4D4D6A" stroke-width="0.8"/>
<rect x="372.00" y="102.00" width="3.50" height="1.60" fill="#F1F5FB" stroke="#5C6F9E" stroke-width="0.5"/>
<rect x="372.00" y="104.20" width="3.50" height="1.60" fill="#F1F5FB" stroke="#5C6F9E" stroke-width="0.5"/>
<text x="381.00" y="105.30" font-size="7.0" fill="#9A3336" font-weight="700" textLength="41.70" lengthAdjust="spacingAndGlyphs">frmEmployee</text>
<path d="M590.2,100.6 L594.4,105 M594.4,100.6 L590.2,105" fill="none" stroke="#333" stroke-width="1"/>
<path d="M588.2,91.8 L590.7,89.3 L593.2,91.8" fill="none" stroke="#3A3A3A" stroke-width="1.2"/>
</g>
<g id="form">
<text x="153.80" y="127.40" font-size="14.9" fill="#7C7C7C" textLength="87.50" lengthAdjust="spacingAndGlyphs">frmEmployee</text>
<rect x="267.40" y="167.40" width="58.00" height="13.20" fill="#FFFFFF" stroke="#A0A0A0" stroke-width="0.8"/>
<rect x="320.50" y="168.10" width="4.30" height="10.70" fill="#1A1A1A"/>
<text x="321.00" y="176.30" font-size="7.6" fill="#FFFFFF" textLength="3.40" lengthAdjust="spacingAndGlyphs">3</text>
<text x="165.70" y="176.40" font-size="8.4" fill="#7F7F7F" textLength="46.60" lengthAdjust="spacingAndGlyphs">Employee ID</text>
<rect x="267.40" y="184.30" width="291.40" height="24.30" fill="#FFFFFF" stroke="#A6A6A6" stroke-width="0.8"/>
<text x="165.70" y="193.20" font-size="8.4" fill="#7F7F7F" textLength="37.60" lengthAdjust="spacingAndGlyphs">FirstName</text>
<text x="268.90" y="193.30" font-size="8.4" fill="#353535" textLength="14.80" lengthAdjust="spacingAndGlyphs">Max</text>
<rect x="267.40" y="213.17" width="291.40" height="24.30" fill="#FFFFFF" stroke="#A6A6A6" stroke-width="0.8"/>
<text x="165.70" y="222.07" font-size="8.4" fill="#7F7F7F" textLength="36.60" lengthAdjust="spacingAndGlyphs">LastName</text>
<text x="268.90" y="222.17" font-size="8.4" fill="#353535" textLength="15.10" lengthAdjust="spacingAndGlyphs">Clay</text>
<rect x="267.40" y="242.04" width="291.40" height="24.30" fill="#FFFFFF" stroke="#A6A6A6" stroke-width="0.8"/>
<text x="165.70" y="250.94" font-size="8.4" fill="#7F7F7F" textLength="33.90" lengthAdjust="spacingAndGlyphs">Address1</text>
<text x="268.90" y="251.04" font-size="8.4" fill="#353535" textLength="57.10" lengthAdjust="spacingAndGlyphs">2556 Mohave St</text>
<rect x="267.40" y="270.91" width="291.40" height="24.30" fill="#FFFFFF" stroke="#A6A6A6" stroke-width="0.8"/>
<text x="165.70" y="279.81" font-size="8.4" fill="#7F7F7F" textLength="34.10" lengthAdjust="spacingAndGlyphs">Address2</text>
<text x="268.90" y="279.91" font-size="8.4" fill="#353535" textLength="31.80" lengthAdjust="spacingAndGlyphs">Optional</text>
<rect x="267.40" y="299.78" width="291.40" height="24.30" fill="#FFFFFF" stroke="#A6A6A6" stroke-width="0.8"/>
<text x="165.70" y="308.68" font-size="8.4" fill="#7F7F7F" textLength="14.30" lengthAdjust="spacingAndGlyphs">City</text>
<text x="268.90" y="308.78" font-size="8.4" fill="#353535" textLength="45.40" lengthAdjust="spacingAndGlyphs">Schaumburg</text>
<rect x="267.40" y="328.65" width="291.40" height="24.30" fill="#FFFFFF" stroke="#A6A6A6" stroke-width="0.8"/>
<text x="165.70" y="337.55" font-size="8.4" fill="#7F7F7F" textLength="18.60" lengthAdjust="spacingAndGlyphs">State</text>
<text x="268.90" y="337.65" font-size="8.4" fill="#353535" textLength="6.10" lengthAdjust="spacingAndGlyphs">IL</text>
<rect x="267.40" y="357.52" width="291.40" height="24.30" fill="#FFFFFF" stroke="#A6A6A6" stroke-width="0.8"/>
<text x="165.70" y="366.42" font-size="8.4" fill="#7F7F7F" textLength="11.00" lengthAdjust="spacingAndGlyphs">Zip</text>
<text x="268.90" y="366.52" font-size="8.4" fill="#353535" textLength="20.40" lengthAdjust="spacingAndGlyphs">60194</text>
<rect x="267.40" y="386.39" width="291.40" height="24.30" fill="#FFFFFF" stroke="#A6A6A6" stroke-width="0.8"/>
<text x="165.70" y="395.29" font-size="8.4" fill="#7F7F7F" textLength="23.60" lengthAdjust="spacingAndGlyphs">Phone</text>
<text x="268.90" y="395.39" font-size="8.4" fill="#353535" textLength="52.80" lengthAdjust="spacingAndGlyphs">(847) 555-6492</text>
<rect x="267.40" y="415.26" width="291.40" height="24.30" fill="#FFFFFF" stroke="#A6A6A6" stroke-width="0.8"/>
<text x="165.70" y="424.16" font-size="8.4" fill="#7F7F7F" textLength="43.30" lengthAdjust="spacingAndGlyphs">Phone Type</text>
<text x="268.90" y="424.26" font-size="8.4" fill="#353535" textLength="21.80" lengthAdjust="spacingAndGlyphs">Home</text>
<rect x="267.40" y="444.13" width="291.40" height="24.30" fill="#FFFFFF" stroke="#A6A6A6" stroke-width="0.8"/>
<text x="165.70" y="453.03" font-size="8.4" fill="#7F7F7F" textLength="20.00" lengthAdjust="spacingAndGlyphs">Email</text>
<text x="268.90" y="453.13" font-size="8.4" fill="#353535" textLength="88.40" lengthAdjust="spacingAndGlyphs">rclay@mycompany.com</text>
<rect x="267.40" y="473.00" width="291.40" height="24.30" fill="#FFFFFF" stroke="#A6A6A6" stroke-width="0.8"/>
<text x="165.70" y="481.90" font-size="8.4" fill="#7F7F7F" textLength="29.30" lengthAdjust="spacingAndGlyphs">JobTitle</text>
<text x="268.90" y="482.00" font-size="8.4" fill="#353535" textLength="76.10" lengthAdjust="spacingAndGlyphs">Accounting Assistant</text>
</g>
<g id="record-navigator">
<text x="143.00" y="541.30" font-size="7.2" fill="#444" textLength="22.80" lengthAdjust="spacingAndGlyphs">Record:</text>
<line x1="170.40" y1="536.90" x2="170.40" y2="540.70" stroke="#222" stroke-width="0.8"/>
<path d="M174.0,537.0 L171.4,538.8 L174.0,540.5999999999999 Z" fill="#222"/>
<path d="M183.79999999999998,537.0 L181.2,538.8 L183.79999999999998,540.5999999999999 Z" fill="#B5B5B5"/>
<rect x="187.60" y="534.60" width="29.40" height="8.40" fill="#FFFFFF" stroke="#D6D6D6" stroke-width="0.6"/>
<text x="189.20" y="541.30" font-size="7.2" fill="#222" textLength="16.60" lengthAdjust="spacingAndGlyphs">1 of 9</text>
<path d="M222.5,537.0 L225.1,538.8 L222.5,540.5999999999999 Z" fill="#222"/>
<path d="M232,537.0 L234.6,538.8 L232,540.5999999999999 Z" fill="#222"/>
<line x1="235.80" y1="536.90" x2="235.80" y2="540.70" stroke="#222" stroke-width="0.8"/>
<path d="M240.8,537.0 L243.4,538.8 L240.8,540.5999999999999 Z" fill="#222"/>
<rect x="244.30" y="537.00" width="3.00" height="3.20" fill="#F5C83C" stroke="#C79A17" stroke-width="0.5"/>
<line x1="250.30" y1="534.50" x2="250.30" y2="543.20" stroke="#CFCFCF" stroke-width="0.7"/>
<path d="M257.6,535.6 L263.4,535.6 L261.2,538.4 L261.2,541.6 L259.8,541.6 L259.8,538.4 Z" fill="#BDBDBD"/>
<path d="M261.8,539.8 L264.8,542.6 M264.8,539.8 L261.8,542.6" fill="none" stroke="#B0B0B0" stroke-width="0.7"/>
<text x="268.00" y="541.30" font-size="7.2" fill="#A8A8A8" textLength="26.50" lengthAdjust="spacingAndGlyphs">No Filter</text>
<line x1="299.50" y1="534.50" x2="299.50" y2="543.20" stroke="#CFCFCF" stroke-width="0.7"/>
<rect x="303.40" y="534.60" width="41.60" height="8.40" fill="#FFFFFF" stroke="#C8C8C8" stroke-width="0.6"/>
<text x="305.00" y="541.30" font-size="7.2" fill="#111" font-weight="700" textLength="19.50" lengthAdjust="spacingAndGlyphs">Search</text>
</g>
<g id="status-bar">
<text x="5.00" y="553.10" font-size="7.2" fill="#3C3C3C" textLength="90.00" lengthAdjust="spacingAndGlyphs">Number created automaticaly</text>
<text x="482.00" y="553.00" font-size="7.2" fill="#3C3C3C" textLength="30.00" lengthAdjust="spacingAndGlyphs">Num Lock</text>
<rect x="530.60" y="546.50" width="8.60" height="7.90" fill="#FDFDFD" stroke="#4A4A4A" stroke-width="0.8"/>
<rect x="530.60" y="546.50" width="8.60" height="1.90" fill="#4A4A4A"/>
<line x1="530.60" y1="550.50" x2="539.20" y2="550.50" stroke="#4A4A4A" stroke-width="0.6"/>
<line x1="530.60" y1="552.50" x2="539.20" y2="552.50" stroke="#4A4A4A" stroke-width="0.6"/>
<line x1="533.80" y1="548.40" x2="533.80" y2="554.40" stroke="#4A4A4A" stroke-width="0.6"/>
<rect x="554.60" y="546.60" width="6.00" height="7.80" fill="#FDFDFD" stroke="#555" stroke-width="0.7"/>
<line x1="554.60" y1="549.00" x2="560.60" y2="549.00" stroke="#555" stroke-width="0.6"/>
<line x1="556.00" y1="551.60" x2="559.20" y2="551.60" stroke="#555" stroke-width="0.6"/>
<path d="M576.4,546.6 L576.4,551 L579.4,551 Z" fill="#F4F4F4" stroke="#777" stroke-width="0.6"/>
<path d="M579.6,551.4 L584.4,546.4" fill="none" stroke="#3F3F3F" stroke-width="1.2"/>
<rect x="577.60" y="552.40" width="7.20" height="2.00" fill="#F8F8F8" stroke="#555" stroke-width="0.7"/>
</g>
<g id="window-frame">
<rect x="0.00" y="39.80" width="0.90" height="518.20" fill="#A67E80"/>
<rect x="1.00" y="39.80" width="1.20" height="517.20" fill="#FBF4F4"/>
<rect x="599.00" y="39.80" width="1.00" height="518.20" fill="#A37C7F"/>
<rect x="598.00" y="39.80" width="1.00" height="517.20" fill="#F6EAEA"/>
<rect x="0.00" y="557.00" width="600.00" height="1.00" fill="#9C6E71"/>
</g>
</svg>
</div>
</body>
</html>
